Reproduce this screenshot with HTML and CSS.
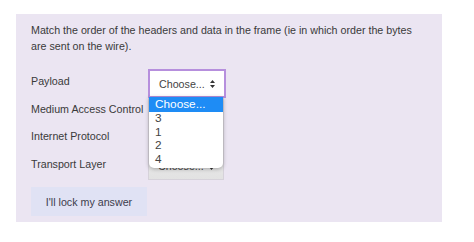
FILE: index.html
```html
<!DOCTYPE html>
<html>
<head>
<meta charset="utf-8">
<link rel="stylesheet" href="styles.css">
</head>
<body>
<div class="panel">
  <p class="prompt">Match the order of the headers and data in the frame (ie in which order the bytes are sent on the wire).</p>
  <div class="rows">
    <div class="row">
      <span class="label">Payload</span>
      <div class="select focused">
        <span>Choose...</span>
        <svg class="arrows" width="5" height="8" viewBox="0 0 5 8"><path d="M2.5 0 L5 3 L0 3 Z M0 5 L5 5 L2.5 8 Z" fill="#333"/></svg>
        <ul class="dropdown">
          <li class="active">Choose...</li>
          <li>3</li>
          <li>1</li>
          <li>2</li>
          <li>4</li>
        </ul>
      </div>
    </div>
    <div class="row">
      <span class="label">Medium Access Control</span>
      <div class="select"><span>Choose...</span><svg class="arrows" width="5" height="8" viewBox="0 0 5 8"><path d="M2.5 0 L5 3 L0 3 Z M0 5 L5 5 L2.5 8 Z" fill="#333"/></svg></div>
    </div>
    <div class="row">
      <span class="label">Internet Protocol</span>
      <div class="select"><span>Choose...</span><svg class="arrows" width="5" height="8" viewBox="0 0 5 8"><path d="M2.5 0 L5 3 L0 3 Z M0 5 L5 5 L2.5 8 Z" fill="#333"/></svg></div>
    </div>
    <div class="row">
      <span class="label">Transport Layer</span>
      <div class="select"><span>Choose...</span><svg class="arrows" width="5" height="8" viewBox="0 0 5 8"><path d="M2.5 0 L5 3 L0 3 Z M0 5 L5 5 L2.5 8 Z" fill="#333"/></svg></div>
    </div>
  </div>
  <div class="button">I'll lock my answer</div>
</div>
</body>
</html>
```
FILE: styles.css
```css
html, body {
  margin: 0;
  padding: 0;
  background: #ffffff;
}
body {
  font-family: "Liberation Sans", Arial, sans-serif;
  font-size: 10.7px;
  color: #3a3a3a;
}
.panel {
  margin: 14px 0 0 16px;
  width: 426px;
  height: 208px;
  box-sizing: border-box;
  background: #ebe5f2;
  padding: 8px 15px 0 15px;
}
.prompt {
  margin: 0;
  line-height: 16px;
}
.rows {
  margin-top: 15px;
  display: flex;
  flex-direction: column;
}
.row {
  display: flex;
  align-items: flex-start;
  height: 27.5px;
}
.label {
  width: 117px;
  white-space: nowrap;
  line-height: 16px;
  padding-top: 4px;
}
.select {
  position: relative;
  width: 76px;
  height: 28px;
  box-sizing: border-box;
  border: 1px solid #d6d2da;
  background: linear-gradient(#ececec, #e2e2e2);
  display: flex;
  align-items: center;
  justify-content: space-between;
  padding: 0 9px 0 9px;
  color: #444;
}
.select.focused {
  width: 78px;
  height: 29px;
  border: 2px solid #b68fdd;
  background: #ffffff;
  z-index: 2;
}
.arrows {
  display: block;
}
.dropdown {
  position: absolute;
  left: -1px;
  top: 26px;
  width: 74px;
  margin: 0;
  padding: 0 0 2px 0;
  list-style: none;
  background: #ffffff;
  border-radius: 0 0 5px 5px;
  box-shadow: 0 1px 4px rgba(0, 0, 0, 0.3);
}
.dropdown li {
  height: 13.6px;
  line-height: 13.6px;
  padding-left: 6px;
  font-size: 11.8px;
  color: #444;
}
.dropdown li.active {
  height: 15px;
  line-height: 15px;
  background: #1e8cf5;
  color: #ffffff;
}
.button {
  margin-top: 8px;
  width: 116px;
  height: 29px;
  display: flex;
  align-items: center;
  justify-content: center;
  background: #e0e2f4;
  color: #3c3c4c;
}
```
